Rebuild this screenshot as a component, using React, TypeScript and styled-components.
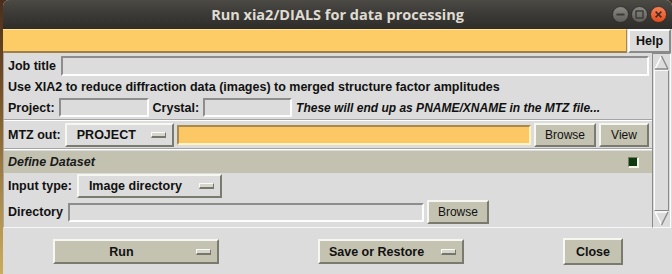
import React from "react";
import styled, { createGlobalStyle, css } from "styled-components";

const GlobalStyle = createGlobalStyle`
  *, *::before, *::after { box-sizing: border-box; }
  html, body { margin: 0; padding: 0; }
  body {
    width: 672px;
    height: 274px;
    overflow: hidden;
    font-family: "Liberation Sans", Arial, sans-serif;
  }
`;

const raised = css`
  border-style: solid;
  border-width: 2px;
  border-color: #f7f7f2 #7b7a6e #7b7a6e #f7f7f2;
`;

const sunken = css`
  border-style: solid;
  border-width: 2px;
  border-color: #8d8d8d #fdfdfd #fdfdfd #8d8d8d;
`;

const Desktop = styled.div`
  width: 672px;
  height: 274px;
  display: flex;
  background: linear-gradient(180deg, #4a2e1c 0%, #7a5426 35%, #a8884a 70%, #c9ad5a 100%);
`;

const Window = styled.div`
  margin-left: 3px;
  flex: 1;
  display: flex;
  flex-direction: column;
  background: #dcdcdc;
  border-top-left-radius: 6px;
  border-top-right-radius: 6px;
  overflow: hidden;
`;

const TitleBar = styled.div`
  height: 29px;
  flex: none;
  display: grid;
  grid-template-columns: 1fr auto 1fr;
  align-items: center;
  background: linear-gradient(180deg, #4b4a45 0%, #3c3b37 45%, #2e2d2a 100%);
`;

const Title = styled.div`
  grid-column: 2;
  color: #dfdbd2;
  font: 700 14.5px "Open Sans", "DejaVu Sans", sans-serif;
  white-space: nowrap;
`;

const Controls = styled.div`
  grid-column: 3;
  justify-self: end;
  display: flex;
  gap: 2px;
  padding-right: 5px;
`;

const TopRow = styled.div`
  height: 24px;
  flex: none;
  display: flex;
`;

const MessageBar = styled.div`
  flex: 1;
  background: #fecc67;
  border-top: 1px solid #ffe6a0;
  border-right: 1px solid #a8894c;
  border-bottom: 2px solid #9e8048;
`;

const HelpButton = styled.button`
  width: 43px;
  margin: 0 1px 0 1px;
  padding: 0;
  ${raised};
  border-color: #fbfbfb #8a8a8a #8a8a8a #fbfbfb;
  background: #dcdcdc;
  font: 700 12.5px "Liberation Sans", Arial, sans-serif;
  color: #111;
`;

const Main = styled.div`
  height: 175px;
  flex: none;
  display: flex;
`;

const Form = styled.div`
  flex: 1;
  display: flex;
  flex-direction: column;
  padding-top: 2px;
  border-left: 1px solid #a9a9a9;
  border-bottom: 1px solid #f6f6f6;
`;

const Row = styled.div<{ $h: number; $gap?: number }>`
  height: ${p => p.$h}px;
  flex: none;
  display: flex;
  align-items: center;
  gap: ${p => p.$gap ?? 3}px;
  padding: 0 3px 0 4px;
`;

const Label = styled.span<{ $space?: number }>`
  font: 700 12.5px "Liberation Sans", Arial, sans-serif;
  color: #111;
  white-space: nowrap;
  margin-right: ${p => p.$space ?? 0}px;
`;

const Hint = styled.span`
  font: italic 700 12px "Liberation Sans", Arial, sans-serif;
  color: #111;
  white-space: nowrap;
`;

const Entry = styled.div<{ $w?: number; $h?: number }>`
  ${sunken};
  ${p => (p.$w ? `width: ${p.$w}px; flex: none;` : "flex: 1;")}
  height: ${p => p.$h ?? 20}px;
  background: #dcdcdc;
`;

const YellowEntry = styled.div`
  flex: 1;
  height: 20px;
  border-style: solid;
  border-width: 2px;
  border-color: #a88a4e #fff4c0 #fff4c0 #a88a4e;
  background: #fcc865;
`;

const Separator = styled.div<{ $mt?: number; $mb?: number }>`
  height: 2px;
  flex: none;
  margin: ${p => p.$mt ?? 0}px 0 ${p => p.$mb ?? 0}px;
  border-top: 1px solid #a4a4a4;
  border-bottom: 1px solid #ffffff;
`;

const SectionBar = styled.div`
  height: 22px;
  flex: none;
  display: flex;
  align-items: center;
  justify-content: space-between;
  padding: 0 13px 0 4px;
  background: #c3c2b1;
`;

const SectionTitle = styled.span`
  font: italic 700 12.5px "Liberation Sans", Arial, sans-serif;
  color: #1a1a1a;
`;

const Toggle = styled.span`
  width: 11px;
  height: 11px;
  border-style: solid;
  border-width: 1px 2px 2px 1px;
  border-color: #7a7a6a #f4f4e6 #f4f4e6 #7a7a6a;
  background: #0e3a0e;
`;

const TkButton = styled.button<{ $w: number; $h?: number; $tone?: "tan" | "gray"; $bold?: boolean; $lift?: number }>`
  width: ${p => p.$w}px;
  height: ${p => p.$h ?? 24}px;
  margin-top: ${p => -(p.$lift ?? 0)}px;
  flex: none;
  ${raised};
  background: ${p => (p.$tone === "gray" ? "#dcdcdc" : "#c4c3b1")};
  font: ${p => (p.$bold ? 700 : 400)} ${p => (p.$bold ? 12.5 : 12)}px "Liberation Sans", Arial, sans-serif;
  color: #111;
  padding: 0;
  display: flex;
  align-items: center;
  justify-content: center;
`;

const MenuButton = styled(TkButton)<{ $center?: boolean }>`
  justify-content: space-between;
  padding: 0 6px 0 ${p => (p.$center ? 0 : 10)}px;
`;

const MenuLabel = styled.span<{ $center?: boolean }>`
  flex: 1;
  text-align: ${p => (p.$center ? "center" : "left")};
  margin-right: ${p => (p.$center ? 8 : 0)}px;
  white-space: nowrap;
`;

const Indicator = styled.span`
  width: 15px;
  height: 6px;
  flex: none;
  border-style: solid;
  border-width: 1px 1px 2px 1px;
  border-color: #fbfbf6 #77766a #77766a #fbfbf6;
  background: #d6d6ce;
`;

const Scrollbar = styled.div`
  width: 19px;
  margin-right: 1px;
  display: flex;
  flex-direction: column;
  border-style: solid;
  border-width: 1px;
  border-color: #8a8a8a #fafafa #fafafa #8a8a8a;
  padding: 1px;
`;

const Slider = styled.div`
  flex: 1;
  border-style: solid;
  border-width: 1px;
  border-color: #fbfbfb #8a8a8a #8a8a8a #fbfbfb;
  background: #dcdcdc;
`;

const Footer = styled.div`
  flex: 1;
  display: flex;
  align-items: flex-start;
  gap: 99px;
  padding: 11px 0 0 50px;
`;

const WinControl = ({ kind }: { kind: "min" | "max" | "close" }) => {
  const close = kind === "close";
  return (
    <svg width="17" height="17" viewBox="0 0 17 17">
      <defs>
        <linearGradient id={`g-${kind}`} x1="0" y1="0" x2="0" y2="1">
          <stop offset="0" stopColor={close ? "#f6845a" : "#8a8984"} />
          <stop offset="1" stopColor={close ? "#df4a1c" : "#5d5c58"} />
        </linearGradient>
      </defs>
      <circle cx="8.5" cy="8.5" r="8" fill={`url(#g-${kind})`} stroke="#2a2926" strokeWidth="0.8" />
      {kind === "min" && <rect x="4.5" y="7.6" width="8" height="1.9" fill="#3b3a36" />}
      {kind === "max" && (
        <rect x="5" y="5" width="7" height="7" fill="none" stroke="#3b3a36" strokeWidth="1.4" />
      )}
      {close && (
        <path d="M5.6 5.6 L11.4 11.4 M11.4 5.6 L5.6 11.4" stroke="#4a2a1c" strokeWidth="1.6" />
      )}
    </svg>
  );
};

const Arrow = ({ dir }: { dir: "up" | "down" }) =>
  dir === "up" ? (
    <svg width="15" height="15" viewBox="0 0 15 15">
      <polygon points="7.5,1 14,14 1,14" fill="#dcdcdc" />
      <line x1="1" y1="14" x2="7.5" y2="1" stroke="#ffffff" strokeWidth="1.4" />
      <line x1="7.5" y1="1" x2="14" y2="14" stroke="#8a8a8a" strokeWidth="1.4" />
      <line x1="1" y1="14" x2="14" y2="14" stroke="#8a8a8a" strokeWidth="1.4" />
    </svg>
  ) : (
    <svg width="15" height="15" viewBox="0 0 15 15">
      <polygon points="1,1 14,1 7.5,14" fill="#dcdcdc" />
      <line x1="1" y1="1" x2="14" y2="1" stroke="#ffffff" strokeWidth="1.4" />
      <line x1="1" y1="1" x2="7.5" y2="14" stroke="#ffffff" strokeWidth="1.4" />
      <line x1="7.5" y1="14" x2="14" y2="1" stroke="#8a8a8a" strokeWidth="1.4" />
    </svg>
  );

export default function App() {
  return (
    <>
      <GlobalStyle />
      <Desktop>
        <Window>
          <TitleBar>
            <Title>Run xia2/DIALS for data processing</Title>
            <Controls>
              <WinControl kind="min" />
              <WinControl kind="max" />
              <WinControl kind="close" />
            </Controls>
          </TitleBar>

          <TopRow>
            <MessageBar />
            <HelpButton>Help</HelpButton>
          </TopRow>

          <Main>
            <Form>
              <Row $h={22} $gap={5}>
                <Label>Job title</Label>
                <Entry />
              </Row>
              <Row $h={20}>
                <Label>Use XIA2 to reduce diffraction data (images) to merged structure factor amplitudes</Label>
              </Row>
              <Row $h={21} $gap={4}>
                <Label>Project:</Label>
                <Entry $w={90} $h={19} />
                <Label>Crystal:</Label>
                <Entry $w={89} $h={19} />
                <Hint>These will end up as PNAME/XNAME in the MTZ file...</Hint>
              </Row>
              <Separator $mt={1} $mb={1} />
              <Row $h={26}>
                <Label $space={1}>MTZ out:</Label>
                <MenuButton $w={109} $tone="gray" $bold>
                  <MenuLabel>PROJECT</MenuLabel>
                  <Indicator />
                </MenuButton>
                <YellowEntry />
                <TkButton $w={62}>Browse</TkButton>
                <TkButton $w={50}>View</TkButton>
              </Row>
              <Separator $mb={1} />
              <SectionBar>
                <SectionTitle>Define Dataset</SectionTitle>
                <Toggle />
              </SectionBar>
              <Row $h={26} $gap={5}>
                <Label>Input type:</Label>
                <MenuButton $w={145} $tone="gray" $bold>
                  <MenuLabel>Image directory</MenuLabel>
                  <Indicator />
                </MenuButton>
              </Row>
              <Row $h={26}>
                <Label $space={2}>Directory</Label>
                <Entry $w={356} $h={19} />
                <TkButton $w={62}>Browse</TkButton>
              </Row>
            </Form>
            <Scrollbar>
              <Arrow dir="up" />
              <Slider />
              <Arrow dir="down" />
            </Scrollbar>
          </Main>

          <Footer>
            <MenuButton $w={166} $h={25} $bold $center>
              <MenuLabel $center>Run</MenuLabel>
              <Indicator />
            </MenuButton>
            <MenuButton $w={146} $h={25} $bold $center>
              <MenuLabel $center>Save or Restore</MenuLabel>
              <Indicator />
            </MenuButton>
            <TkButton $w={60} $h={27} $bold $lift={1}>
              Close
            </TkButton>
          </Footer>
        </Window>
      </Desktop>
    </>
  );
}
